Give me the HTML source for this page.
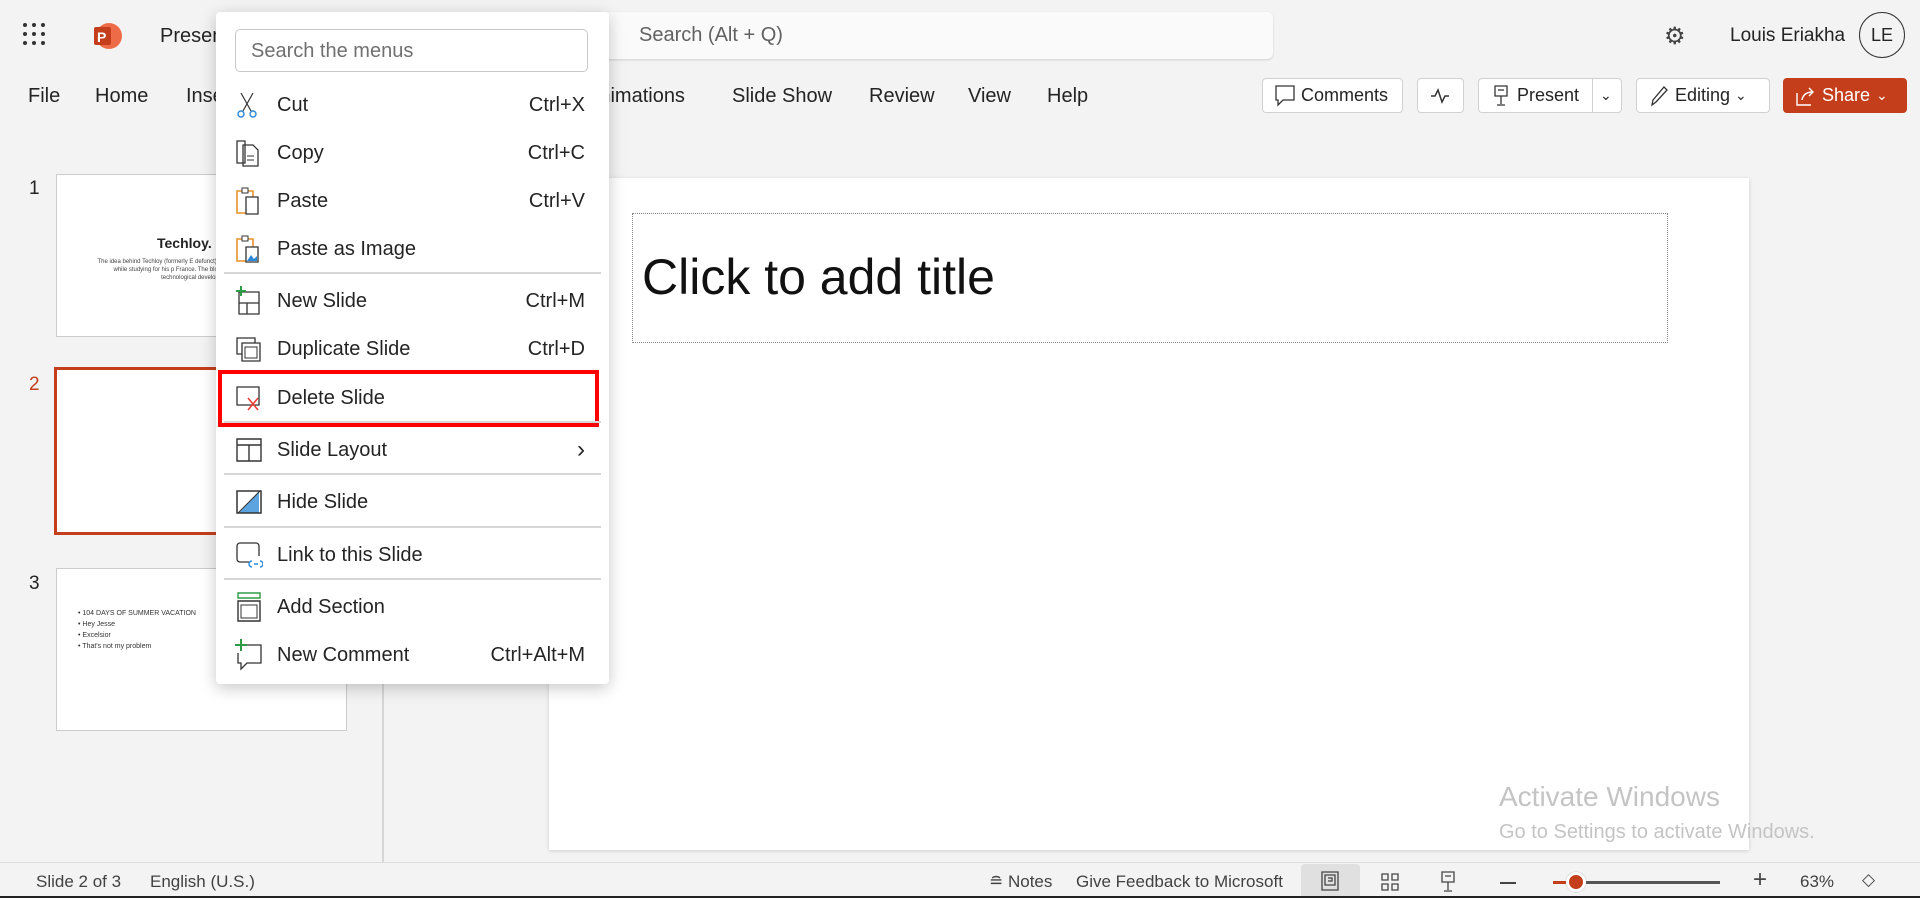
<!DOCTYPE html>
<html><head><meta charset="utf-8"><style>
*{margin:0;padding:0;box-sizing:border-box}
body{width:1920px;height:898px;background:#f3f3f3;font-family:"Liberation Sans",sans-serif;color:#242424;position:relative;overflow:hidden}
.a{position:absolute;white-space:nowrap}
.btn{position:absolute;background:#fff;border:1px solid #d1d1d1;border-radius:4px;height:35px;top:78px;font-size:18px;display:flex;align-items:center}
.mi{position:absolute;left:0;width:393px;height:40px;font-size:20px;display:flex;align-items:center}
.mi .t{position:absolute;left:61px}
.mi .k{position:absolute;right:24px}
.mi svg{position:absolute;left:19px}
.sep{position:absolute;left:8px;width:377px;height:2px;background:#d6d6d6}
.st{font-size:17px;color:#424242;top:872px}
</style></head><body>
<svg class="a" style="left:22px;top:22px" width="24" height="24"><g fill="#333"><circle cx="3" cy="3" r="2"/><circle cx="12" cy="3" r="2"/><circle cx="21" cy="3" r="2"/><circle cx="3" cy="12" r="2"/><circle cx="12" cy="12" r="2"/><circle cx="21" cy="12" r="2"/><circle cx="3" cy="21" r="2"/><circle cx="12" cy="21" r="2"/><circle cx="21" cy="21" r="2"/></g></svg>
<svg class="a" style="left:92px;top:21px" width="32" height="30"><circle cx="17" cy="15" r="13" fill="#ed6c47"/><rect x="2" y="6" width="17" height="18" rx="2" fill="#c43e1c"/><text x="5" y="21" font-size="14" font-weight="bold" fill="#fff" font-family="Liberation Sans">P</text></svg>
<div class="a" style="left:160px;top:25px;font-size:20px">Presen</div>
<div class="a" style="left:576px;top:12px;width:697px;height:47px;background:#fafafa;border-radius:6px;box-shadow:0 1px 2px rgba(0,0,0,.15)"></div>
<div class="a" style="left:639px;top:24px;font-size:20px;color:#616161">Search (Alt + Q)</div>
<div class="a" style="left:1664px;top:22px;font-size:24px;color:#424242">⚙</div>
<div class="a" style="left:1730px;top:25px;font-size:19px">Louis Eriakha</div>
<div class="a" style="left:1859px;top:12px;width:46px;height:46px;border:1px solid #333;border-radius:50%;font-size:18px;text-align:center;line-height:44px">LE</div>
<div class="a" style="top:85px;left:28px;font-size:20px">File</div>
<div class="a" style="top:85px;left:95px;font-size:20px">Home</div>
<div class="a" style="top:85px;left:186px;font-size:20px">Insert</div>
<div class="a" style="top:85px;left:586px;font-size:20px">Animations</div>
<div class="a" style="top:85px;left:732px;font-size:20px">Slide Show</div>
<div class="a" style="top:85px;left:869px;font-size:20px">Review</div>
<div class="a" style="top:85px;left:968px;font-size:20px">View</div>
<div class="a" style="top:85px;left:1047px;font-size:20px">Help</div>
<div class="btn" style="left:1262px;width:141px"><svg style="margin:0 6px 0 12px" width="20" height="22"><path d="M1 1h18v14H8l-5 5v-5H1z" fill="none" stroke="#333" stroke-width="1.3"/></svg>Comments</div>
<div class="btn" style="left:1417px;width:47px;justify-content:center"><svg width="24" height="16"><path d="M2 8h4l3-6 4 12 3-6h4" fill="none" stroke="#333" stroke-width="1.5"/></svg></div>
<div class="btn" style="left:1478px;width:144px"><svg style="margin:0 8px 0 14px" width="16" height="22"><path d="M2 1h12v10H2zM8 11v8M4 20h8M5 5h6" fill="none" stroke="#333" stroke-width="1.3"/></svg>Present<div style="position:absolute;left:113px;top:0;width:1px;height:33px;background:#d1d1d1"></div><span style="position:absolute;left:121px;font-size:14px">⌄</span></div>
<div class="btn" style="left:1636px;width:134px"><svg style="margin:0 6px 0 12px" width="20" height="24"><path d="M3 21l1-5L15 3l3 3L7 18z" fill="none" stroke="#333" stroke-width="1.3"/></svg>Editing <span style="font-size:14px;margin-left:5px">⌄</span></div>
<div class="btn" style="left:1783px;width:124px;background:#c43e1c;border-color:#c43e1c;color:#fff"><svg style="margin:0 6px 0 12px" width="20" height="22"><path d="M1 8v12h14M6 15c1-6 5-8 11-8M13 3l4 4-4 4" fill="none" stroke="#fff" stroke-width="1.4"/></svg>Share <span style="font-size:14px;margin-left:6px">⌄</span></div>
<div class="a" style="left:29px;top:178px;font-size:19px">1</div>
<div class="a" style="left:29px;top:374px;font-size:19px;color:#c43e1c">2</div>
<div class="a" style="left:29px;top:573px;font-size:19px">3</div>
<div class="a" style="left:56px;top:174px;width:291px;height:163px;background:#fff;border:1px solid #ccc">
<div class="a" style="left:100px;top:60px;font-size:14px;font-weight:bold">Techloy.</div>
<div class="a" style="left:40px;top:83px;font-size:6px;line-height:8px;text-align:center;width:220px;white-space:normal;color:#444">The idea behind Techloy (formerly E defunct) was born in 2008 from Lo apartment, while studying for his p France. The blog was his way of keepi nascent technological developments world.</div></div>
<div class="a" style="left:54px;top:367px;width:295px;height:168px;background:#fff;border:3px solid #c43e1c"></div>
<div class="a" style="left:56px;top:568px;width:291px;height:163px;background:#fff;border:1px solid #ccc;font-size:7px;color:#333;line-height:11px">
<div style="position:absolute;left:21px;top:39px">• 104 DAYS OF SUMMER VACATION<br>• Hey Jesse<br>• Excelsior<br>• That's not my problem</div></div>
<div class="a" style="left:382px;top:120px;width:2px;height:743px;background:#d6d6d6"></div>
<div class="a" style="left:549px;top:178px;width:1200px;height:672px;background:#fff;box-shadow:0 1px 4px rgba(0,0,0,.15)"></div>
<div class="a" style="left:632px;top:213px;width:1036px;height:130px;border:1px dotted #888"></div>
<div class="a" style="left:642px;top:248px;font-size:50px;color:#111">Click to add title</div>
<div class="a" style="left:1499px;top:781px;font-size:28px;color:#c4c4c4">Activate Windows</div>
<div class="a" style="left:1499px;top:821px;font-size:20px;color:#c4c4c4">Go to Settings to activate Windows.</div>
<div class="a" style="left:0;top:862px;width:1920px;height:1px;background:#ddd"></div>
<div class="a st" style="left:36px">Slide 2 of 3</div>
<div class="a st" style="left:150px">English (U.S.)</div>
<div class="a st" style="left:989px">≘ Notes</div>
<div class="a st" style="left:1076px">Give Feedback to Microsoft</div>
<div class="a" style="left:1301px;top:864px;width:59px;height:34px;background:#e0e0e0;border-radius:4px 4px 0 0"></div>
<svg class="a" style="left:1321px;top:871px" width="18" height="20"><path d="M1 1h16v18H1zM4 4h10v10H4zM7 7h4v3H7" fill="none" stroke="#444" stroke-width="1.3"/></svg>
<svg class="a" style="left:1381px;top:873px" width="18" height="18"><path d="M1 1h6v6H1zM11 1h6v6h-6zM1 11h6v6H1zM11 11h6v6h-6z" fill="none" stroke="#444" stroke-width="1.3"/></svg>
<svg class="a" style="left:1440px;top:871px" width="16" height="22"><path d="M2 1h12v10H2zM8 11v8M4 20h8M5 5h6" fill="none" stroke="#444" stroke-width="1.3"/></svg>
<div class="a" style="left:1500px;top:882px;width:16px;height:1.5px;background:#444"></div>
<div class="a" style="left:1553px;top:881px;width:167px;height:3px;background:#555"></div>
<div class="a" style="left:1553px;top:881px;width:20px;height:3px;background:#c43e1c"></div>
<div class="a" style="left:1566px;top:872px;width:20px;height:20px;border-radius:50%;background:#c43e1c;border:3px solid #fff;box-shadow:0 0 1px #888"></div>
<div class="a" style="left:1753px;top:866px;font-size:24px;color:#444;font-weight:300">+</div>
<div class="a st" style="left:1800px">63%</div>
<div class="a" style="left:1862px;top:870px;font-size:17px;color:#444">◇</div>
<div class="a" style="left:0;top:896px;width:1920px;height:2px;background:#222"></div>
<div class="a" style="left:216px;top:12px;width:393px;height:672px;background:#fff;border-radius:4px;box-shadow:0 4px 16px rgba(0,0,0,.22)">
<div class="a" style="left:19px;top:17px;width:353px;height:43px;border:1px solid #c8c8c8;border-radius:5px;font-size:20px;color:#707070;padding:10px 0 0 15px">Search the menus</div>
<div class="mi" style="top:73px"><svg width="24" height="28"><path d="M6 2l10 18M18 2L8 20" stroke="#333" stroke-width="1.2" fill="none"/><circle cx="6" cy="23" r="3" stroke="#2b88d8" fill="none" stroke-width="1.4"/><circle cx="18" cy="23" r="3" stroke="#2b88d8" fill="none" stroke-width="1.4"/></svg><span class="t">Cut</span><span class="k">Ctrl+X</span></div>
<div class="mi" style="top:121px"><svg width="26" height="28"><path d="M2 2h8v22H2zM8 6h10l5 5v16H8z" fill="#fff" stroke="#333" stroke-width="1.3"/><path d="M12 17h7M12 21h7" stroke="#333"/></svg><span class="t">Copy</span><span class="k">Ctrl+C</span></div>
<div class="mi" style="top:169px"><svg width="26" height="30"><path d="M2 5h16v22H2z" fill="none" stroke="#e8912d" stroke-width="1.6"/><path d="M7 2h6v5H7z" fill="#fff" stroke="#333"/><path d="M11 11h12v17H11z" fill="#fff" stroke="#333" stroke-width="1.3"/></svg><span class="t">Paste</span><span class="k">Ctrl+V</span></div>
<div class="mi" style="top:217px"><svg width="26" height="30"><path d="M2 5h16v22H2z" fill="none" stroke="#e8912d" stroke-width="1.6"/><path d="M7 2h6v5H7z" fill="#fff" stroke="#333"/><path d="M11 13h12v15H11z" fill="#fff" stroke="#333" stroke-width="1.3"/><path d="M12 27l4-6 3 4 3-3v5z" fill="#2b88d8"/></svg><span class="t">Paste as Image</span></div>
<div class="sep" style="top:260px"></div>
<div class="mi" style="top:269px"><svg width="28" height="30"><path d="M4 6h20v22H4zM4 17h20M12 17v11" fill="none" stroke="#333" stroke-width="1.3"/><path d="M6 0v10M1 5h10" stroke="#2e9b45" stroke-width="2"/></svg><span class="t">New Slide</span><span class="k">Ctrl+M</span></div>
<div class="mi" style="top:317px"><svg width="28" height="30"><path d="M2 4h18v16H2z" fill="none" stroke="#333" stroke-width="1.3"/><path d="M7 9h18v18H7z" fill="#fff" stroke="#333" stroke-width="1.3"/><path d="M10 13h12v11H10z" fill="none" stroke="#333"/></svg><span class="t">Duplicate Slide</span><span class="k">Ctrl+D</span></div>
<div class="mi" style="top:366px"><svg width="28" height="30"><path d="M2 4h22v18H2z" fill="none" stroke="#333" stroke-width="1.3"/><path d="M13 15l10 12M23 15L13 27" stroke="#e8392d" stroke-width="1.5"/></svg><span class="t">Delete Slide</span></div>
<div class="a" style="left:2px;top:358px;width:381px;height:57px;border:4px solid #f00"></div>
<div class="sep" style="top:409px"></div>
<div class="mi" style="top:418px"><svg width="28" height="30"><path d="M2 4h24v22H2zM2 10h24M14 10v16" fill="none" stroke="#333" stroke-width="1.4"/></svg><span class="t">Slide Layout</span><span class="k" style="font-size:24px">›</span></div>
<div class="sep" style="top:461px"></div>
<div class="mi" style="top:470px"><svg width="28" height="30"><path d="M4 26L24 4v22z" fill="#5ca4e0"/><path d="M2 4h24v22H2z" fill="none" stroke="#333" stroke-width="1.5"/><path d="M3 26L25 4" stroke="#333"/></svg><span class="t">Hide Slide</span></div>
<div class="sep" style="top:514px"></div>
<div class="mi" style="top:523px"><svg width="28" height="30"><path d="M14 22H5a3 3 0 0 1-3-3V6a3 3 0 0 1 3-3h16a3 3 0 0 1 3 3v10" fill="none" stroke="#333" stroke-width="1.3"/><path d="M17 21a3 3 0 0 0 0 6M25 21a3 3 0 0 1 0 6M19 24h4" fill="none" stroke="#2b88d8" stroke-width="1.4"/></svg><span class="t">Link to this Slide</span></div>
<div class="sep" style="top:566px"></div>
<div class="mi" style="top:575px"><svg width="28" height="32"><path d="M3 2h22v5H3z" fill="none" stroke="#2e9b45" stroke-width="1.4"/><path d="M3 10h22v20H3z" fill="none" stroke="#333" stroke-width="1.4"/><path d="M6 14h16v13H6z" fill="none" stroke="#333"/></svg><span class="t">Add Section</span></div>
<div class="mi" style="top:623px"><svg width="28" height="32"><path d="M10 6h16v18H12l-6 6v-6H3V14" fill="none" stroke="#333" stroke-width="1.3"/><path d="M6 0v12M0 6h12" stroke="#2e9b45" stroke-width="2"/></svg><span class="t">New Comment</span><span class="k">Ctrl+Alt+M</span></div>
</div>
</body></html>
